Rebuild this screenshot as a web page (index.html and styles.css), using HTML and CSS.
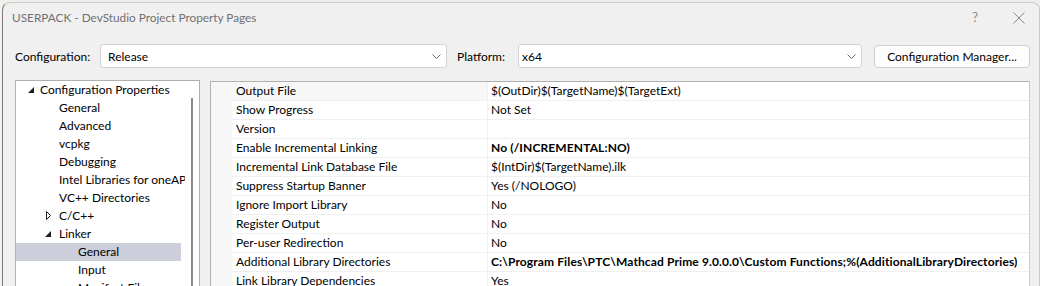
FILE: index.html
```html
<!DOCTYPE html>
<html lang="en">
<head>
    <meta charset="UTF-8">
    <title>USERPACK - DevStudio Project Property Pages</title>
    <link rel="stylesheet" href="styles.css">
</head>
<body>
<div class="screen">
    <div class="behind"></div>

    <div class="window">
        <!-- Title bar -->
        <div class="titlebar">
            <span class="title">USERPACK - DevStudio Project Property Pages</span>
            <span class="caption-btns">
                <span class="help">?</span>
                <svg class="close" width="12" height="12" viewBox="0 0 12 12">
                    <path d="M0.5 0.5 L11.5 11.5 M11.5 0.5 L0.5 11.5" stroke="#8a8a8a" stroke-width="1" fill="none"/>
                </svg>
            </span>
        </div>

        <!-- Configuration / platform row -->
        <div class="toolbar">
            <span class="lbl cfg-lbl">Configuration:</span>
            <div class="combo cfg-combo">
                <span>Release</span>
                <svg width="9" height="5" viewBox="0 0 9 5"><polyline points="0.5,0.5 4.5,4.5 8.5,0.5" stroke="#6a6a6a" fill="none"/></svg>
            </div>
            <span class="lbl plat-lbl">Platform:</span>
            <div class="combo plat-combo">
                <span>x64</span>
                <svg width="9" height="5" viewBox="0 0 9 5"><polyline points="0.5,0.5 4.5,4.5 8.5,0.5" stroke="#6a6a6a" fill="none"/></svg>
            </div>
            <button class="btn">Configuration Manager...</button>
        </div>

        <div class="panels">
            <!-- Tree -->
            <div class="tree">
                <div class="tree-items">
                    <div class="node lvl0"><svg class="exp" width="14" height="10" viewBox="0 0 14 10"><polygon points="8,2 8,8 2,8" fill="#1e1e1e"/></svg>Configuration Properties</div>
                    <div class="node lvl1"><span class="noexp"></span>General</div>
                    <div class="node lvl1"><span class="noexp"></span>Advanced</div>
                    <div class="node lvl1"><span class="noexp"></span>vcpkg</div>
                    <div class="node lvl1"><span class="noexp"></span>Debugging</div>
                    <div class="node lvl1"><span class="noexp"></span>Intel Libraries for oneAPI</div>
                    <div class="node lvl1"><span class="noexp"></span>VC++ Directories</div>
                    <div class="node lvl1"><svg class="exp" width="14" height="10" viewBox="0 0 14 10"><polygon points="1.5,0.5 5.5,4.5 1.5,8.5" stroke="#1e1e1e" fill="none"/></svg>C/C++</div>
                    <div class="node lvl1"><svg class="exp" width="14" height="10" viewBox="0 0 14 10"><polygon points="6,2 6,8 0,8" fill="#1e1e1e"/></svg>Linker</div>
                    <div class="node lvl2 selected"><span class="noexp"></span>General</div>
                    <div class="node lvl2"><span class="noexp"></span>Input</div>
                    <div class="node lvl2"><span class="noexp"></span>Manifest File</div>
                </div>
                <div class="tree-scroll"><div class="thumb"></div></div>
            </div>

            <!-- Property grid -->
            <div class="grid">
                <div class="gutter"></div>
                <div class="rows">
                    <div class="row current"><div class="name">Output File</div><div class="value">$(OutDir)$(TargetName)$(TargetExt)</div></div>
                    <div class="row"><div class="name">Show Progress</div><div class="value">Not Set</div></div>
                    <div class="row"><div class="name">Version</div><div class="value"></div></div>
                    <div class="row"><div class="name">Enable Incremental Linking</div><div class="value bold">No (/INCREMENTAL:NO)</div></div>
                    <div class="row"><div class="name">Incremental Link Database File</div><div class="value">$(IntDir)$(TargetName).ilk</div></div>
                    <div class="row"><div class="name">Suppress Startup Banner</div><div class="value">Yes (/NOLOGO)</div></div>
                    <div class="row"><div class="name">Ignore Import Library</div><div class="value">No</div></div>
                    <div class="row"><div class="name">Register Output</div><div class="value">No</div></div>
                    <div class="row"><div class="name">Per-user Redirection</div><div class="value">No</div></div>
                    <div class="row"><div class="name">Additional Library Directories</div><div class="value bold">C:\Program Files\PTC\Mathcad Prime 9.0.0.0\Custom Functions;%(AdditionalLibraryDirectories)</div></div>
                    <div class="row"><div class="name">Link Library Dependencies</div><div class="value">Yes</div></div>
                </div>
            </div>
        </div>
    </div>
</div>
</body>
</html>
```

FILE: styles.css
```css
body {
    margin: 0;
    padding: 0;
    font-family: Lato, "Noto Sans", sans-serif;
    font-size: 12px;
    color: #000;
    background-color: #efeeea;
}

.screen {
    display: flex;
    width: 1040px;
    height: 286px;
    overflow: hidden;
    padding-top: 2px;
    box-sizing: border-box;
}

.behind {
    width: 2px;
    flex-shrink: 0;
    background-color: #f3f2ec;
}

.window {
    flex: 1;
    background-color: #f0f0f0;
    border-left: 1px solid #7c7c7c;
    border-top: 1px solid #c9c9c9;
    border-right: 1px solid #c9c9c9;
    border-top-left-radius: 8px;
    border-top-right-radius: 8px;
    padding: 0 9px 0 12px;
    display: flex;
    flex-direction: column;
}

.window > * {
    flex-shrink: 0;
}

/* Title bar */
.titlebar {
    height: 28px;
    display: flex;
    align-items: center;
    justify-content: space-between;
}

.title {
    margin-left: -3px;
    color: #707070;
    font-size: 11.8px;
}

.caption-btns {
    display: flex;
    align-items: center;
    margin-right: 5px;
}

.help {
    color: #8a8a8a;
    font-size: 13px;
    margin-right: 35px;
}

.close {
    display: block;
    margin-top: 2px;
}

/* Config row */
.toolbar {
    display: flex;
    align-items: center;
    padding: 13px 0 12px;
}

.lbl {
    flex-shrink: 0;
}

.cfg-lbl {
    width: 85px;
}

.plat-lbl {
    width: 61px;
    margin-left: 10px;
}

.combo {
    height: 24px;
    box-sizing: border-box;
    background-color: #fff;
    border: 1px solid #d3d3d3;
    border-radius: 3px;
    display: flex;
    align-items: center;
    justify-content: space-between;
    padding: 0 5px 0 7px;
}

.combo svg {
    display: block;
}

.cfg-combo {
    width: 347px;
}

.plat-combo {
    width: 344px;
    padding-left: 3px;
}

.btn {
    margin-left: 12px;
    width: 156px;
    height: 23px;
    background-color: #fdfdfd;
    border: 1px solid #d0d0d0;
    border-radius: 4px;
    font-family: inherit;
    font-size: 12px;
    color: #000;
    padding: 0;
}

/* Panels */
.panels {
    display: flex;
    gap: 10px;
    height: 230px;
}

.tree {
    width: 185px;
    box-sizing: border-box;
    background-color: #fff;
    border: 1px solid #b0b0b0;
    display: flex;
    overflow: hidden;
}

.tree-items {
    width: 169px;
    overflow: hidden;
}

.node {
    height: 18px;
    line-height: 16px;
    display: flex;
    align-items: center;
    white-space: nowrap;
}

.node.lvl0 { padding-left: 10px; }
.node.lvl1 { padding-left: 29px; }
.node.lvl2 { padding-left: 48px; }

.exp,
.noexp {
    width: 14px;
    flex-shrink: 0;
    display: block;
}

.node.selected {
    background-color: #cccedb;
    margin-right: 4px;
}

.tree-scroll {
    flex: 1;
}

.thumb {
    margin: 17px 0 0 6px;
    width: 2px;
    height: 300px;
    background-color: #8b8b8b;
}

.grid {
    flex: 1;
    margin-top: 1px;
    background-color: #fff;
    border: 1px solid #b0b0b0;
    border-right-color: #c9c9c9;
    display: flex;
    overflow: hidden;
}

.gutter {
    width: 21px;
    flex-shrink: 0;
    background-color: #f7f7f7;
}

.rows {
    flex: 1;
}

.row {
    display: flex;
    height: 19px;
    box-sizing: border-box;
    border-bottom: 1px solid #f0f0f0;
    white-space: nowrap;
}

.row .name {
    width: 256px;
    flex-shrink: 0;
    padding-left: 4px;
    box-sizing: border-box;
    border-right: 1px solid #f0f0f0;
    line-height: 18px;
}

.row .value {
    padding-left: 3px;
    line-height: 18px;
    overflow: hidden;
}

.row.current .name {
    background-color: #f7f7f7;
}

.bold {
    font-weight: bold;
    letter-spacing: 0.12px;
}
```
